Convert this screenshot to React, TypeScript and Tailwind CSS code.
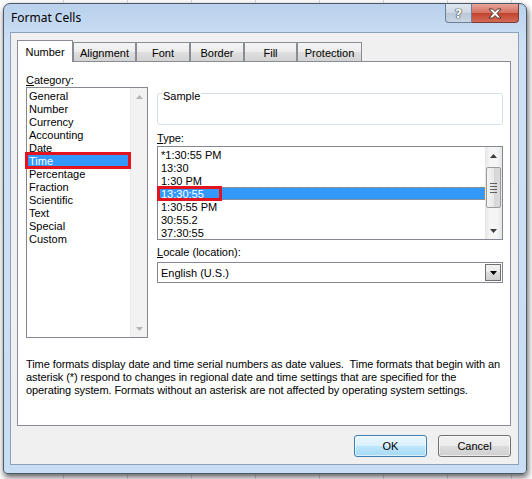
import React from 'react';

const categories = ['General', 'Number', 'Currency', 'Accounting', 'Date', 'Time', 'Percentage', 'Fraction', 'Scientific', 'Text', 'Special', 'Custom'];
const types = ['*1:30:55 PM', '13:30', '1:30 PM', '13:30:55', '1:30:55 PM', '30:55.2', '37:30:55'];
const tabs = [
  { label: 'Number', w: 'w-[56px]' },
  { label: 'Alignment', w: 'w-[63px]' },
  { label: 'Font', w: 'w-[54px]' },
  { label: 'Border', w: 'w-[54px]' },
  { label: 'Fill', w: 'w-[53px]' },
  { label: 'Protection', w: 'w-[65px]' },
];

function UpArrow({ color }: { color: string }) {
  return (
    <svg width="7" height="4" viewBox="0 0 7 4">
      <path d="M0 4 L3.5 0 L7 4 Z" fill={color} />
    </svg>
  );
}

function DownArrow({ color }: { color: string }) {
  return (
    <svg width="7" height="4" viewBox="0 0 7 4">
      <path d="M0 0 L7 0 L3.5 4 Z" fill={color} />
    </svg>
  );
}

export default function App() {
  return (
    <div className="w-[532px] h-[479px] overflow-hidden bg-[repeating-linear-gradient(90deg,#ffffff_0px,#ffffff_63px,#d8dce2_63px,#d8dce2_64px)] pt-[3px] pl-[3px] font-['Liberation_Sans',Arial,sans-serif] text-[11px] text-black">
      {/* dialog window */}
      <div className="w-[524px] h-[471px] flex flex-col rounded-t-[7px] rounded-b-[4px] border border-[#4a5868] bg-[linear-gradient(#b9d1ec,#cfe1f5_40px,#c9ddf3)] shadow-[1px_3px_6px_rgba(0,0,0,0.65)]">
        {/* title bar */}
        <div className="h-[28px] flex items-start shrink-0">
          <span className="mt-[6px] ml-[7px] text-[12px] leading-[16px] font-['Noto_Sans',sans-serif]">Format Cells</span>
          <div className="ml-auto mr-[7px] flex h-[19px]">
            <div className="w-[27px] h-full rounded-bl-[4px] border border-t-0 border-[#6b7f96] bg-[linear-gradient(#dfe6ee,#cdd7e3_50%,#b8c6d6_50%,#c9d6e4)] flex items-center justify-center">
              <span className="text-white font-bold text-[13px] leading-none font-['DejaVu_Sans',sans-serif] [text-shadow:0_0_1px_#333,0_0_1px_#333,0_0_1px_#333]">?</span>
            </div>
            <div className="w-[47px] h-full rounded-br-[4px] border border-l-0 border-t-0 border-[#7a3b35] bg-[linear-gradient(#e8a59a,#d4705f_50%,#c2432e_50%,#d26a55)] flex items-center justify-center">
              <svg width="14" height="11" viewBox="0 0 14 11">
                <path d="M1 1 L4.5 1 L7 3.5 L9.5 1 L13 1 L9 5.5 L13 10 L9.5 10 L7 7.5 L4.5 10 L1 10 L5 5.5 Z" fill="#fff" stroke="#3a2a28" strokeWidth="0.9" />
              </svg>
            </div>
          </div>
        </div>

        {/* content */}
        <div className="flex-1 ml-[6px] mr-[7px] mb-[8px] border border-[#8ca2bb] bg-[#f0f0f0] flex flex-col">
          {/* tabs */}
          <div className="ml-[6px] mt-[7px] flex items-end h-[21px] relative z-10">
            {tabs.map((t, i) =>
              i === 0 ? (
                <div key={t.label} className={`${t.w} h-[22px] -mb-px border border-b-0 border-[#898c95] bg-white flex items-center justify-center pt-[1px]`}>
                  {t.label}
                </div>
              ) : (
                <div key={t.label} className={`${t.w} h-[19px] border border-b-0 border-[#898c95] bg-[linear-gradient(#f4f4f4,#ececec_50%,#dfdfdf_50%,#d3d3d3)] flex items-center justify-center pt-[2px]`}>
                  {t.label}
                </div>
              )
            )}
          </div>

          {/* tab panel */}
          <div className="ml-[6px] w-[494px] h-[365px] border border-[#898c95] bg-white pl-[8px] pt-[11px]">
            <div className="flex gap-[9px]">
              {/* category column */}
              <div className="w-[122px]">
                <div className="leading-[15px] h-[13px] mb-[1px]"><u>C</u>ategory:</div>
                <div className="relative h-[251px] border border-[#828790] flex">
                  <div className="flex-1 pt-[1px]">
                    {categories.map((c) => (
                      <div key={c} className={`h-[13px] leading-[15px] pl-[2px] ${c === 'Time' ? 'bg-[#3399ff] text-white' : ''}`}>
                        {c}
                      </div>
                    ))}
                  </div>
                  <div className="w-[17px] bg-[#f2f2f2] border-l border-[#ebebeb] flex flex-col justify-between">
                    <div className="h-[17px] flex items-center justify-center"><UpArrow color="#b4b4b4" /></div>
                    <div className="h-[17px] flex items-center justify-center"><DownArrow color="#b4b4b4" /></div>
                  </div>
                  <div className="absolute left-[-2px] top-[64px] w-[106px] h-[17px] border-[3px] border-[#e3141e]" />
                </div>
              </div>

              {/* right column */}
              <div className="w-[346px]">
                {/* sample group */}
                <div className="relative mt-[20px] h-[32px] rounded-[3px] border border-[#d5dfe5]">
                  <span className="absolute left-[4px] top-[-5px] bg-white px-[1px] leading-[15px]">Sample</span>
                </div>

                <div className="mt-[6px] leading-[15px] h-[13px] mb-[2px]"><u>T</u>ype:</div>
                <div className="relative h-[94px] border border-[#828790] flex">
                  <div className="flex-1 pt-[1px]">
                    {types.map((t) => (
                      <div key={t} className={`h-[13px] leading-[15px] pl-[3px] ${t === '13:30:55' ? 'bg-[#3399ff] text-white outline-1 outline-dotted outline-offset-[-1px] outline-[#d9883e]' : ''}`}>
                        {t}
                      </div>
                    ))}
                  </div>
                  <div className="w-[17px] bg-[linear-gradient(90deg,#e6e6e6,#f5f5f5_30%,#f5f5f5_70%,#e6e6e6)] flex flex-col">
                    <div className="h-[17px] flex items-center justify-center"><UpArrow color="#3c3c3c" /></div>
                    <div className="mt-[3px] mx-[1px] h-[41px] rounded-[2px] border border-[#9b9b9b] bg-[linear-gradient(90deg,#f4f4f4,#e8e8e8_50%,#d6d6d6_50%,#dadada)] flex flex-col items-center justify-center gap-[2px]">
                      <div className="w-[7px] h-px bg-[#606060]" />
                      <div className="w-[7px] h-px bg-[#606060]" />
                      <div className="w-[7px] h-px bg-[#606060]" />
                      <div className="w-[7px] h-px bg-[#606060]" />
                    </div>
                    <div className="mt-auto h-[17px] flex items-center justify-center"><DownArrow color="#3c3c3c" /></div>
                  </div>
                  <div className="absolute left-[-1px] top-[39px] w-[65px] h-[15px] border-[3px] border-[#e3141e]" />
                </div>

                <div className="mt-[5px] leading-[15px] h-[13px] mb-[4px]"><u>L</u>ocale (location):</div>
                <div className="h-[21px] border border-[#828790] flex items-center pl-[3px] pr-[1px]">
                  <span className="flex-1 pt-[1px]">English (U.S.)</span>
                  <div className="w-[16px] h-[17px] border border-[#707070] bg-[linear-gradient(#f2f2f2,#ebebeb_50%,#dddddd_50%,#cfcfcf)] flex items-center justify-center">
                    <DownArrow color="#000" />
                  </div>
                </div>
              </div>
            </div>

            {/* description */}
            <p className="mt-[20px] leading-[13px] whitespace-nowrap tracking-[-0.08px]">
              Time formats display date and time serial numbers as date values.&nbsp; Time formats that begin with an
              <br />
              asterisk (*) respond to changes in regional date and time settings that are specified for the
              <br />
              operating system. Formats without an asterisk are not affected by operating system settings.
            </p>
          </div>

          {/* buttons */}
          <div className="mt-[9px] mr-[7px] flex justify-end gap-[11px]">
            <div className="w-[73px] h-[22px] rounded-[3px] border border-[#3c7fb1] bg-[linear-gradient(#eaf6fd,#d9f0fc_50%,#bee6fd_50%,#a7d9f5)] shadow-[inset_0_0_0_1px_rgba(255,255,255,0.6)] flex items-center justify-center">
              OK
            </div>
            <div className="w-[73px] h-[22px] rounded-[3px] border border-[#707070] bg-[linear-gradient(#f2f2f2,#ebebeb_50%,#dddddd_50%,#cfcfcf)] shadow-[inset_0_0_0_1px_rgba(255,255,255,0.6)] flex items-center justify-center">
              Cancel
            </div>
          </div>
        </div>
      </div>
    </div>
  );
}
